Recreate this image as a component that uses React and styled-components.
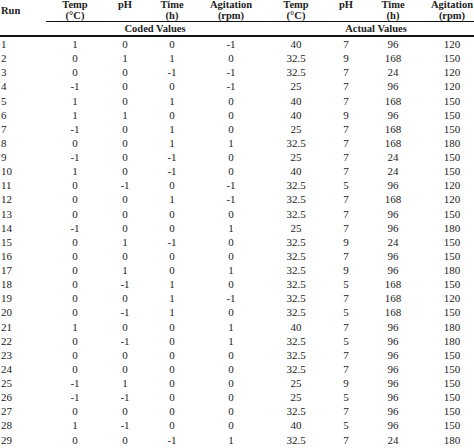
import styled, { createGlobalStyle } from "styled-components";

const GlobalStyle = createGlobalStyle`
  html, body {
    margin: 0;
    padding: 0;
    background: #ffffff;
    overflow: hidden;
  }
  body {
    font-family: "Liberation Serif", "Times New Roman", serif;
    color: #1c1c1c;
  }
`;

const cols = "46px 58px 42px 52px 66px 64px 36px 58px 60px";

const Table = styled.div`
  width: 482px;
  font-size: 11px;
`;

const HeadRow = styled.div`
  display: grid;
  grid-template-columns: ${cols};
  height: 22px;
`;

const HeadCell = styled.div`
  display: flex;
  flex-direction: column;
  align-items: ${(p) => (p.$left ? "flex-start" : "center")};
  justify-content: ${(p) => (p.$left ? "center" : "flex-start")};
  padding-left: ${(p) => (p.$left ? "1px" : "0")};
  font-size: 10.5px;
  font-weight: bold;
  line-height: 10.5px;
  border-bottom: ${(p) => (p.$left ? "none" : "1px solid #111")};
`;

const GroupRow = styled.div`
  display: grid;
  grid-template-columns: ${cols};
  height: 13px;
  border-bottom: 2px solid #111;
  align-items: center;
  font-size: 10.5px;
  font-weight: bold;
`;

const GroupCell = styled.div`
  grid-column: span ${(p) => p.$span || 1};
  text-align: center;
  padding-left: ${(p) => p.$shift || 0}px;
`;

const Row = styled.div`
  display: grid;
  grid-template-columns: ${cols};
  height: 14.14px;
  align-items: center;
  line-height: 14.14px;
`;

const Cell = styled.div`
  text-align: ${(p) => (p.$left ? "left" : "center")};
  padding-left: ${(p) => (p.$left ? "1px" : "0")};
  white-space: nowrap;
`;

const heads = [
  ["Temp", "(°C)"],
  ["pH", ""],
  ["Time", "(h)"],
  ["Agitation", "(rpm)"],
  ["Temp", "(°C)"],
  ["pH", ""],
  ["Time", "(h)"],
  ["Agitation", "(rpm)"],
];

const rows = [
  [1, 1, 0, 0, -1, 40, 7, 96, 120],
  [2, 0, 1, 1, 0, 32.5, 9, 168, 150],
  [3, 0, 0, -1, -1, 32.5, 7, 24, 120],
  [4, -1, 0, 0, -1, 25, 7, 96, 120],
  [5, 1, 0, 1, 0, 40, 7, 168, 150],
  [6, 1, 1, 0, 0, 40, 9, 96, 150],
  [7, -1, 0, 1, 0, 25, 7, 168, 150],
  [8, 0, 0, 1, 1, 32.5, 7, 168, 180],
  [9, -1, 0, -1, 0, 25, 7, 24, 150],
  [10, 1, 0, -1, 0, 40, 7, 24, 150],
  [11, 0, -1, 0, -1, 32.5, 5, 96, 120],
  [12, 0, 0, 1, -1, 32.5, 7, 168, 120],
  [13, 0, 0, 0, 0, 32.5, 7, 96, 150],
  [14, -1, 0, 0, 1, 25, 7, 96, 180],
  [15, 0, 1, -1, 0, 32.5, 9, 24, 150],
  [16, 0, 0, 0, 0, 32.5, 7, 96, 150],
  [17, 0, 1, 0, 1, 32.5, 9, 96, 180],
  [18, 0, -1, 1, 0, 32.5, 5, 168, 150],
  [19, 0, 0, 1, -1, 32.5, 7, 168, 120],
  [20, 0, -1, 1, 0, 32.5, 5, 168, 150],
  [21, 1, 0, 0, 1, 40, 7, 96, 180],
  [22, 0, -1, 0, 1, 32.5, 5, 96, 180],
  [23, 0, 0, 0, 0, 32.5, 7, 96, 150],
  [24, 0, 0, 0, 0, 32.5, 7, 96, 150],
  [25, -1, 1, 0, 0, 25, 9, 96, 150],
  [26, -1, -1, 0, 0, 25, 5, 96, 150],
  [27, 0, 0, 0, 0, 32.5, 7, 96, 150],
  [28, 1, -1, 0, 0, 40, 5, 96, 150],
  [29, 0, 0, -1, 1, 32.5, 7, 24, 180],
];

export default function App() {
  return (
    <>
      <GlobalStyle />
      <Table>
        <HeadRow>
          <HeadCell $left>Run</HeadCell>
          {heads.map((h, i) => (
            <HeadCell key={i}>
              <span>{h[0]}</span>
              <span>{h[1]}</span>
            </HeadCell>
          ))}
        </HeadRow>
        <GroupRow>
          <GroupCell />
          <GroupCell $span={4}>Coded Values</GroupCell>
          <GroupCell $span={4} $shift={6}>
            Actual Values
          </GroupCell>
        </GroupRow>
        {rows.map((r) => (
          <Row key={r[0]}>
            {r.map((v, j) => (
              <Cell key={j} $left={j === 0}>
                {v}
              </Cell>
            ))}
          </Row>
        ))}
      </Table>
    </>
  );
}
